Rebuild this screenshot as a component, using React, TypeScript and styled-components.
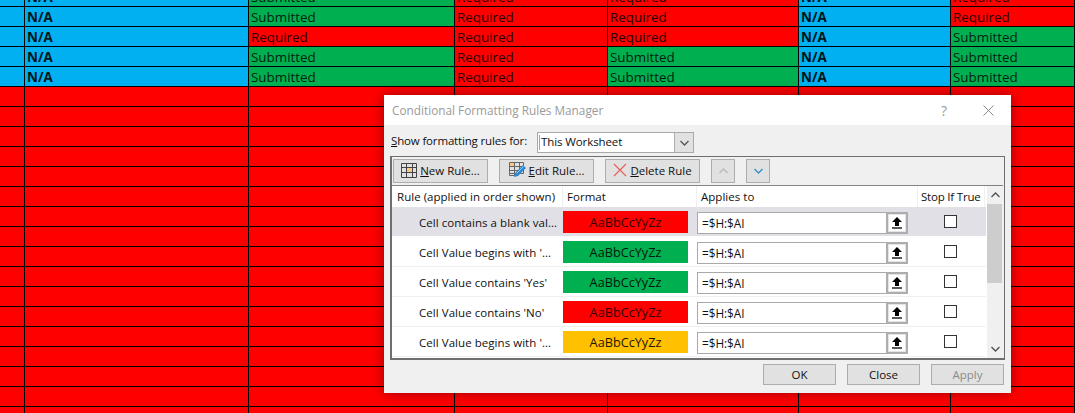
import React from "react";
import styled, { createGlobalStyle } from "styled-components";

const Global = createGlobalStyle`
  html, body { margin: 0; padding: 0; background: #ff0000; }
  * { box-sizing: border-box; }
`;

const Page = styled.div`
  position: relative;
  width: 1075px;
  height: 413px;
  overflow: hidden;
  background: #ff0000;
`;

const Sheet = styled.div`
  margin-top: -13px;
  display: flex;
  flex-direction: column;
`;

const SheetRow = styled.div`
  display: grid;
  grid-template-columns: 25px 224px 206px 153px 191px 152px 124px;
  height: 20px;
`;

const fills = { blue: "#00b0f0", green: "#00b050", red: "#ff0000", gold: "#ffc000" } as const;
type Fill = keyof typeof fills;

const SheetCell = styled.div<{ $fill: Fill; $bold?: boolean }>`
  background: ${(p) => fills[p.$fill]};
  border-right: 1px solid #000;
  border-bottom: 1px solid #000;
  padding-left: 2px;
  font-family: "Open Sans", sans-serif;
  font-size: 13.4px;
  line-height: 20px;
  font-weight: ${(p) => (p.$bold ? 700 : 400)};
  color: ${(p) => (p.$fill === "red" ? "#2a0000" : p.$fill === "green" ? "#001f0f" : "#00141c")};
  white-space: nowrap;
  overflow: hidden;
`;

const Dialog = styled.div`
  position: absolute;
  left: 384px;
  top: 95px;
  width: 627px;
  height: 298px;
  background: #f0f0f0;
  box-shadow: 0 0 12px rgba(0, 0, 0, 0.4);
  font-family: "Open Sans", sans-serif;
  font-size: 11.5px;
  color: #101010;
  display: flex;
  flex-direction: column;
`;

const TitleBar = styled.div`
  height: 30px;
  flex: none;
  background: #fff;
  display: flex;
  align-items: center;
  padding: 0 17px 0 8px;
  color: #9a9a9a;
  font-size: 11.8px;
`;

const Help = styled.span`
  margin-left: auto;
  margin-right: 36px;
  font-size: 14px;
  color: #9a9a9a;
`;

const RuleScope = styled.div`
  display: flex;
  align-items: center;
  height: 21px;
  margin: 7px 0 3px 7px;
`;

const ScopeLabel = styled.label`
  width: 146px;
  position: relative;
  top: -2px;
  letter-spacing: -0.16px;
`;

const Key = styled.span`
  text-decoration: underline;
`;

const SelectBox = styled.div`
  width: 157px;
  height: 21px;
  background: #fff;
  border: 1px solid #a9a9a9;
  display: flex;
  align-items: center;
  padding-left: 1px;
  letter-spacing: -0.1px;
`;

const SelectText = styled.span`
  margin-bottom: 2px;
`;

const Caret = styled.span`
  width: 1px;
  height: 15px;
  background: #7ab0dc;
  margin-right: 1px;
`;

const SelectArrow = styled.span`
  margin-left: auto;
  width: 19px;
  height: 19px;
  background: #e1e1e1;
  border-left: 1px solid #adadad;
  display: flex;
  align-items: center;
  justify-content: center;
`;

const Group = styled.div`
  width: 615px;
  height: 204px;
  flex: none;
  margin-left: 6px;
  border: solid #6f6f6f;
  border-width: 1px 1px 2px 2px;
  display: flex;
  flex-direction: column;
  background: #f0f0f0;
`;

const Toolbar = styled.div`
  height: 28px;
  flex: none;
  display: flex;
  gap: 11px;
  padding: 2px 0 0 1px;
`;

const ToolButton = styled.div`
  width: 95px;
  height: 24px;
  background: #e1e1e1;
  border: 1px solid #adadad;
  padding-bottom: 2px;
  display: flex;
  align-items: center;
  justify-content: center;
  gap: 3px;
  white-space: nowrap;
`;

const ArrowButton = styled.div`
  width: 24px;
  height: 24px;
  background: #e1e1e1;
  border: 1px solid #adadad;
  display: flex;
  align-items: center;
  justify-content: center;
`;

const List = styled.div`
  width: 611px;
  height: 172px;
  flex: none;
  border-top: 1px solid #828282;
  background: #fff;
  display: flex;
  box-sizing: content-box;
`;

const ListMain = styled.div`
  width: 594px;
  flex: none;
  overflow: hidden;
`;

const columns = "171px 134px 221px 67px";

const HeaderRow = styled.div`
  display: grid;
  grid-template-columns: ${columns};
  height: 21px;
`;

const HeaderCell = styled.div<{ $inset: number; $tight?: boolean }>`
  padding-left: ${(p) => p.$inset}px;
  line-height: 21px;
  border-right: 1px solid #f0f0f0;
  white-space: nowrap;
  letter-spacing: ${(p) => (p.$tight ? "-0.2px" : "0.03px")};
`;

const RuleRow = styled.div<{ $selected?: boolean }>`
  display: grid;
  grid-template-columns: ${columns};
  height: 30px;
  background: ${(p) => (p.$selected ? "#e0e0e6" : "#fff")};
  border-bottom: 1px solid ${(p) => (p.$selected ? "#fff" : "#f0f0f0")};
  align-items: start;
`;

const RuleName = styled.div`
  padding-left: 27px;
  line-height: 31px;
  white-space: nowrap;
  letter-spacing: 0.05px;
`;

const Swatch = styled.div<{ $fill: Fill }>`
  width: 125px;
  height: 22px;
  margin: 4px 0 0 0;
  background: ${(p) => fills[p.$fill]};
  color: ${(p) => (p.$fill === "red" ? "#300000" : p.$fill === "green" ? "#00170b" : "#1e1600")};
  text-align: center;
  line-height: 23px;
  font-size: 12.7px;
`;

const RangeField = styled.div`
  width: 211px;
  height: 22px;
  margin-top: 5px;
  background: #fff;
  border: 1px solid #a9a9a9;
  border-right: none;
  display: flex;
  align-items: center;
  padding-left: 4px;
  font-size: 11.8px;
  letter-spacing: -0.05px;
`;

const RangeButton = styled.span`
  margin-left: auto;
  width: 22px;
  height: 22px;
  margin-top: -1px;
  margin-bottom: -1px;
  background: #fff;
  border: 2px solid #adadad;
  outline: 1px solid #e4e4e4;
  outline-offset: -3px;
  display: flex;
  align-items: center;
  justify-content: center;
`;

const CheckCell = styled.div`
  padding: 8px 0 0 26px;
`;

const CheckBox = styled.span`
  display: block;
  width: 13px;
  height: 13px;
  background: #fff;
  border: 1px solid #333;
`;

const ScrollBar = styled.div`
  width: 17px;
  margin-left: 1px;
  flex: none;
  background: #f0f0f0;
  display: flex;
  flex-direction: column;
`;

const ScrollEnd = styled.div`
  height: 18px;
  flex: none;
  display: flex;
  align-items: center;
  justify-content: center;
`;

const ScrollThumb = styled.div`
  height: 79px;
  flex: none;
  width: 15px;
  background: #cdcdcd;
`;

const ScrollSpace = styled.div`
  flex: 1;
`;

const Footer = styled.div`
  display: flex;
  justify-content: flex-end;
  gap: 11px;
  padding-right: 7px;
  margin-top: 4px;
`;

const FooterButton = styled.div<{ $disabled?: boolean }>`
  width: 73px;
  height: 21px;
  background: #e1e1e1;
  border: 1px solid #adadad;
  color: ${(p) => (p.$disabled ? "#8a8a8a" : "#101010")};
  text-align: center;
  line-height: 20px;
`;

const NewRuleIcon = () => (
  <svg width="16" height="15" viewBox="0 0 16 15">
    <rect x="5.5" y="4.5" width="6" height="5" fill="#fbc88c" stroke="#f0a040" />
    <path d="M.5.5h15v14H.5zM.5 4.5h15M.5 9.5h15M5.5.5v14M11.5.5v14" fill="none" stroke="#444" />
  </svg>
);

const EditRuleIcon = () => (
  <svg width="17" height="16" viewBox="0 0 17 16">
    <rect x="1" y="1" width="5" height="4" fill="#fbc88c" />
    <path d="M.5.5h14v11H.5zM.5 4.5h14M.5 8.5h9M5.5.5v13H.5v-2M10.5.5v7" fill="none" stroke="#666" />
    <path d="M5 15l1-4 8-8 3 3-8 8z" fill="#2f86d0" />
    <path d="M7.5 11.5l7-7" stroke="#9ccbee" />
  </svg>
);

const DeleteIcon = () => (
  <svg width="14" height="14" viewBox="0 0 14 14">
    <path d="M1 1l12 12M13 1L1 13" stroke="#e8605c" strokeWidth="1.2" fill="none" />
  </svg>
);

const Chevron = ({ dir, color, width = 9 }: { dir: "up" | "down"; color: string; width?: number }) => (
  <svg width={width} height="6" viewBox="0 0 9 6">
    <path d={dir === "up" ? "M.5 5l4-4 4 4" : "M.5 1l4 4 4-4"} fill="none" stroke={color} strokeWidth="1.3" />
  </svg>
);

const UploadIcon = () => (
  <svg width="12" height="12" viewBox="0 0 12 12">
    <path d="M6 0L11 5H8V9H4V5H1z" fill="#000" />
    <path d="M1 11h10" stroke="#000" strokeWidth="1.3" />
  </svg>
);

const CloseIcon = () => (
  <svg width="11" height="11" viewBox="0 0 11 11">
    <path d="M.5.5l10 10M10.5.5l-10 10" stroke="#8a8a8a" strokeWidth="1" fill="none" />
  </svg>
);

type Row = [Fill, string][];
const N: [Fill, string] = ["blue", "N/A"];
const S: [Fill, string] = ["green", "Submitted"];
const R: [Fill, string] = ["red", "Required"];
const B: [Fill, string] = ["blue", ""];
const E: [Fill, string] = ["red", ""];

const dataRows: Row[] = [
  [B, N, S, R, R, N, R],
  [B, N, S, R, R, N, R],
  [B, N, R, R, R, N, S],
  [B, N, S, R, S, N, S],
  [B, N, S, R, S, N, S],
];
const sheetRows: Row[] = [...dataRows, ...Array.from({ length: 17 }, () => [E, E, E, E, E, E, E] as Row)];

const rules: { name: string; fill: Fill }[] = [
  { name: "Cell contains a blank val...", fill: "red" },
  { name: "Cell Value begins with '...", fill: "green" },
  { name: "Cell Value contains 'Yes'", fill: "green" },
  { name: "Cell Value contains 'No'", fill: "red" },
  { name: "Cell Value begins with '...", fill: "gold" },
];

export default function App() {
  return (
    <Page>
      <Global />
      <Sheet>
        {sheetRows.map((row, i) => (
          <SheetRow key={i}>
            {row.map(([fill, text], j) => (
              <SheetCell key={j} $fill={fill} $bold={text === "N/A"}>
                {text}
              </SheetCell>
            ))}
          </SheetRow>
        ))}
      </Sheet>
      <Dialog>
        <TitleBar>
          Conditional Formatting Rules Manager
          <Help>?</Help>
          <CloseIcon />
        </TitleBar>
        <RuleScope>
          <ScopeLabel>
            <Key>S</Key>how formatting rules for:
          </ScopeLabel>
          <SelectBox>
            <Caret />
            <SelectText>This Worksheet</SelectText>
            <SelectArrow>
              <Chevron dir="down" color="#555" />
            </SelectArrow>
          </SelectBox>
        </RuleScope>
        <Group>
          <Toolbar>
            <ToolButton>
              <NewRuleIcon />
              <span>
                <Key>N</Key>ew Rule...
              </span>
            </ToolButton>
            <ToolButton>
              <EditRuleIcon />
              <span>
                <Key>E</Key>dit Rule...
              </span>
            </ToolButton>
            <ToolButton>
              <DeleteIcon />
              <span>
                <Key>D</Key>elete Rule
              </span>
            </ToolButton>
            <ArrowButton>
              <Chevron dir="up" color="#b8b8b8" width={11} />
            </ArrowButton>
            <ArrowButton>
              <Chevron dir="down" color="#2f8fd0" width={11} />
            </ArrowButton>
          </Toolbar>
          <List>
            <ListMain>
              <HeaderRow>
                <HeaderCell $inset={5}>Rule (applied in order shown)</HeaderCell>
                <HeaderCell $inset={4}>Format</HeaderCell>
                <HeaderCell $inset={4}>Applies to</HeaderCell>
                <HeaderCell $inset={3} $tight>
                  Stop If True
                </HeaderCell>
              </HeaderRow>
              {rules.map((rule, i) => (
                <RuleRow key={i} $selected={i === 0}>
                  <RuleName>{rule.name}</RuleName>
                  <Swatch $fill={rule.fill}>AaBbCcYyZz</Swatch>
                  <RangeField>
                    =$H:$AI
                    <RangeButton>
                      <UploadIcon />
                    </RangeButton>
                  </RangeField>
                  <CheckCell>
                    <CheckBox />
                  </CheckCell>
                </RuleRow>
              ))}
            </ListMain>
            <ScrollBar>
              <ScrollEnd>
                <Chevron dir="up" color="#505050" />
              </ScrollEnd>
              <ScrollThumb />
              <ScrollSpace />
              <ScrollEnd>
                <Chevron dir="down" color="#505050" />
              </ScrollEnd>
            </ScrollBar>
          </List>
        </Group>
        <Footer>
          <FooterButton>OK</FooterButton>
          <FooterButton>Close</FooterButton>
          <FooterButton $disabled>Apply</FooterButton>
        </Footer>
      </Dialog>
    </Page>
  );
}
